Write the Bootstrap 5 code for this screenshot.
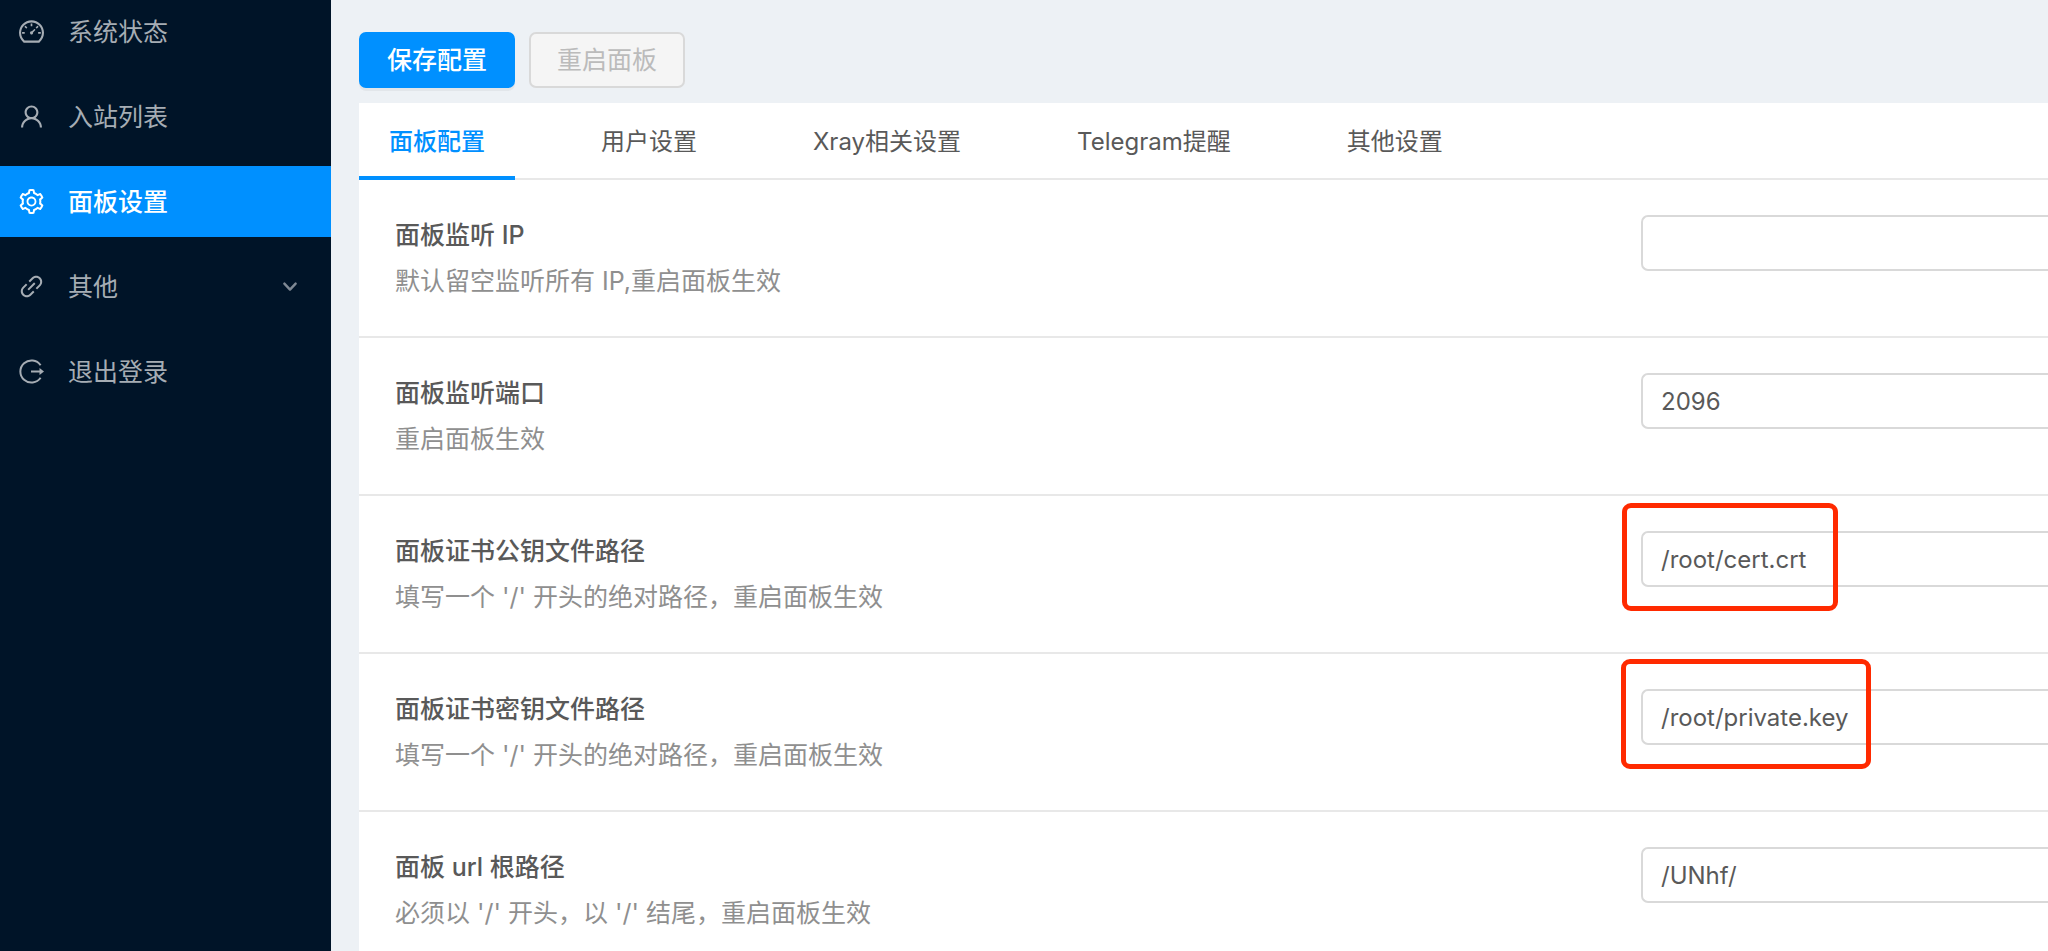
<!DOCTYPE html>
<html lang="zh-CN" data-bs-theme="light">
<head>
<meta charset="utf-8">
<meta name="viewport" content="width=device-width, initial-scale=1">
<title>面板设置</title>
<link href="https://cdn.jsdelivr.net/npm/bootstrap@5.3.0/dist/css/bootstrap.min.css" rel="stylesheet">
<style>
  :root {
    --accent: #0090ff;
    --line: #e8e8e8;
    --field-line: #d9d9d9;
    --ink: #595959;
    --ink-soft: #8f8f8f;
  }
  body {
    font-family: Inter, "Noto Sans CJK SC", sans-serif;
    font-size: 25px;
    line-height: 38px;
    color: var(--ink);
    background: #edf1f5;
  }
  .side { width: 331px; background: #001428; }
  .side-menu { gap: 14px; margin-top: -4px; }
  .side-menu .nav-link {
    gap: 24px;
    height: 71px;
    padding: 0 34px 0 19px;
    border-radius: 0;
    color: #a6adb4;
  }
  .side-menu .nav-link.active { background: var(--accent); color: #fff; font-weight: 500; }
  .side-menu svg { width: 25px; height: 25px; flex: none; }
  .side-menu svg.chevron { width: 14px; height: 14px; }
  .content-area { padding: 32px 0 0 28px; }
  .toolbar { gap: 14px; margin-bottom: 15px; }
  .toolbar .btn {
    height: 56px;
    padding: 0 26px;
    font-size: inherit;
    line-height: 38px;
    border-width: 2px;
    border-radius: 7px;
  }
  .toolbar .btn-save { background: var(--accent); border-color: var(--accent); color: #fff; font-weight: 500; box-shadow: 0 3px 0 rgba(0, 0, 0, .045); }
  .toolbar .btn-restart:disabled { background: #f5f5f5; border-color: var(--field-line); color: #bbb; opacity: 1; }
  .panel-tabs { gap: 56px; border-bottom: 2px solid var(--line); }
  .panel-tabs .nav-link {
    height: 77px;
    padding: 4px 30px 0;
    margin-bottom: -2px;
    font-size: 24px;
    border: 0;
    border-bottom: 4px solid transparent;
    border-radius: 0;
    color: var(--ink);
  }
  .panel-tabs .nav-link.active { background: none; color: var(--accent); border-color: var(--accent); font-weight: 500; }
  .setting {
    display: grid;
    grid-template-columns: 1246fr 407fr;
    height: 158px;
    padding: 35px 0 0 36px;
    border-bottom: 2px solid var(--line);
  }
  .setting-title { font-weight: 500; line-height: 40px; margin-bottom: 7px; }
  .setting-note { color: var(--ink-soft); }
  .setting .form-control {
    height: 56px;
    padding: 0 18px;
    font-size: 24px;
    color: var(--ink);
    border: 2px solid var(--field-line);
    border-radius: 7px;
  }
  .marker { border: 5px solid #ff2a00; border-radius: 9px; pointer-events: none; }
  .marker-cert { left: -19px; top: -28px; width: 216px; height: 108px; }
  .marker-key { left: -20px; top: -30px; width: 250px; height: 110px; }
</style>
</head>
<body>
<div class="d-flex vh-100 overflow-hidden">
  <aside class="side flex-shrink-0">
    <nav class="side-menu nav flex-column flex-nowrap">
      <a class="nav-link d-flex align-items-center" href="#">
        <svg viewBox="64 64 896 896" fill="currentColor" aria-hidden="true"><path d="M924.8 385.6a446.7 446.7 0 0 0-96-142.4 446.7 446.7 0 0 0-142.4-96C631.1 123.8 572.5 112 512 112s-119.1 11.8-174.4 35.2a446.7 446.7 0 0 0-142.4 96 446.7 446.7 0 0 0-96 142.4C75.8 440.9 64 499.5 64 560c0 132.7 58.3 257.7 159.9 343.1l1.7 1.4c5.8 4.8 13.1 7.5 20.6 7.5h531.7c7.5 0 14.8-2.7 20.6-7.5l1.7-1.4C901.7 817.7 960 692.7 960 560c0-60.5-11.9-119.1-35.2-174.4zM761.4 836H262.6A371.12 371.12 0 0 1 140 560c0-99.4 38.7-192.8 109-263 70.3-70.3 163.7-109 263-109 99.4 0 192.8 38.7 263 109 70.3 70.3 109 163.7 109 263 0 105.6-44.5 205.5-122.6 276zM623.5 421.5a8.03 8.03 0 0 0-11.3 0L527.7 506c-18.7-5-39.4-.2-54.1 14.5a55.95 55.95 0 0 0 0 79.2 55.95 55.95 0 0 0 79.2 0 55.87 55.87 0 0 0 14.5-54.1l84.5-84.5c3.1-3.1 3.1-8.2 0-11.3l-28.3-28.3zM490 320h44c4.4 0 8-3.6 8-8v-80c0-4.4-3.6-8-8-8h-44c-4.4 0-8 3.6-8 8v80c0 4.4 3.6 8 8 8zm260 218v44c0 4.4 3.6 8 8 8h80c4.4 0 8-3.6 8-8v-44c0-4.4-3.6-8-8-8h-80c-4.4 0-8 3.6-8 8zm12.7-197.2l-31.1-31.1a8.03 8.03 0 0 0-11.3 0l-56.6 56.6a8.03 8.03 0 0 0 0 11.3l31.1 31.1c3.1 3.1 8.2 3.1 11.3 0l56.6-56.6c3.1-3.1 3.1-8.2 0-11.3zm-458.6-31.1a8.03 8.03 0 0 0-11.3 0l-31.1 31.1a8.03 8.03 0 0 0 0 11.3l56.6 56.6c3.1 3.1 8.2 3.1 11.3 0l31.1-31.1c3.1-3.1 3.1-8.2 0-11.3l-56.6-56.6zM262 530h-80c-4.4 0-8 3.6-8 8v44c0 4.4 3.6 8 8 8h80c4.4 0 8-3.6 8-8v-44c0-4.4-3.6-8-8-8z"/></svg>
        <span>系统状态</span>
      </a>
      <a class="nav-link d-flex align-items-center" href="#">
        <svg viewBox="64 64 896 896" fill="currentColor" aria-hidden="true"><path d="M858.5 763.6a374 374 0 0 0-80.6-119.5 375.63 375.63 0 0 0-119.5-80.6c-.4-.2-.8-.3-1.2-.5C719.5 518 760 444.7 760 362c0-137-111-248-248-248S264 225 264 362c0 82.7 40.5 156 102.8 201.1-.4.2-.8.3-1.2.5-44.8 18.9-85 46-119.5 80.6a375.63 375.63 0 0 0-80.6 119.5A371.7 371.7 0 0 0 136 901.8a8 8 0 0 0 8 8.2h60c4.4 0 7.9-3.5 8-7.8 2-77.2 33-149.5 87.8-204.3 56.7-56.7 132-87.9 212.2-87.9s155.5 31.2 212.2 87.9C779 752.7 810 825 812 902.2c.1 4.4 3.6 7.8 8 7.8h60a8 8 0 0 0 8-8.2c-1-47.8-10.9-94.3-29.5-138.2zM512 534c-45.9 0-89.1-17.9-121.6-50.4S340 407.9 340 362c0-45.9 17.9-89.1 50.4-121.6S466.1 190 512 190s89.1 17.9 121.6 50.4S684 316.1 684 362c0 45.9-17.9 89.1-50.4 121.6S557.9 534 512 534z"/></svg>
        <span>入站列表</span>
      </a>
      <a class="nav-link active d-flex align-items-center" href="#" aria-current="page">
        <svg viewBox="64 64 896 896" fill="currentColor" aria-hidden="true"><path d="M924.8 625.7l-65.5-56c3.1-19 4.7-38.4 4.7-57.8s-1.6-38.8-4.7-57.8l65.5-56a32.03 32.03 0 0 0 9.3-35.2l-.9-2.6a443.74 443.74 0 0 0-79.7-137.9l-1.8-2.1a32.12 32.12 0 0 0-35.1-9.5l-81.3 28.9c-30-24.6-63.5-44-99.7-57.6l-15.7-85a32.05 32.05 0 0 0-25.8-25.7l-2.7-.5c-52.1-9.4-106.9-9.4-159 0l-2.7.5a32.05 32.05 0 0 0-25.8 25.7l-15.8 85.4a351.86 351.86 0 0 0-99 57.4l-81.9-29.1a32 32 0 0 0-35.1 9.5l-1.8 2.1a446.02 446.02 0 0 0-79.7 137.9l-.9 2.6c-4.5 12.5-.8 26.5 9.3 35.2l66.3 56.6c-3.1 18.8-4.6 38-4.6 57.1 0 19.2 1.5 38.4 4.6 57.1L99 625.5a32.03 32.03 0 0 0-9.3 35.2l.9 2.6c18.1 50.4 44.9 96.9 79.7 137.9l1.8 2.1a32.12 32.12 0 0 0 35.1 9.5l81.9-29.1c29.8 24.5 63.1 43.9 99 57.4l15.8 85.4a32.05 32.05 0 0 0 25.8 25.7l2.7.5a449.4 449.4 0 0 0 159 0l2.7-.5a32.05 32.05 0 0 0 25.8-25.7l15.7-85a350 350 0 0 0 99.7-57.6l81.3 28.9a32 32 0 0 0 35.1-9.5l1.8-2.1c34.8-41.1 61.6-87.5 79.7-137.9l.9-2.6c4.5-12.3.8-26.3-9.3-35zM788.3 465.9c2.5 15.1 3.8 30.6 3.8 46.1s-1.3 31-3.8 46.1l-6.6 40.1 74.7 63.9a370.03 370.03 0 0 1-42.6 73.6L721 702.8l-31.4 25.8c-23.9 19.6-50.5 35-79.3 45.8l-38.1 14.3-17.9 97a377.5 377.5 0 0 1-85 0l-17.9-97.2-37.8-14.5c-28.5-10.8-55-26.2-78.7-45.7l-31.4-25.9-93.4 33.2c-17-22.9-31.2-47.6-42.6-73.6l75.5-64.5-6.5-40c-2.4-14.9-3.7-30.3-3.7-45.5 0-15.3 1.2-30.6 3.7-45.5l6.5-40-75.5-64.5c11.3-26.1 25.6-50.7 42.6-73.6l93.4 33.2 31.4-25.9c23.7-19.5 50.2-34.9 78.7-45.7l37.9-14.3 17.9-97.2c28.1-3.2 56.8-3.2 85 0l17.9 97 38.1 14.3c28.7 10.8 55.4 26.2 79.3 45.8l31.4 25.8 92.8-32.9c17 22.9 31.2 47.6 42.6 73.6L781.8 426l6.5 39.9zM512 336c-97.2 0-176 78.8-176 176s78.8 176 176 176 176-78.8 176-176-78.8-176-176-176zm79.2 255.2A111.6 111.6 0 0 1 512 624c-29.9 0-58-11.7-79.2-32.8A111.6 111.6 0 0 1 400 512c0-29.9 11.7-58 32.8-79.2C454 411.6 482.1 400 512 400c29.9 0 58 11.6 79.2 32.8A111.6 111.6 0 0 1 624 512c0 29.9-11.7 58-32.8 79.2z"/></svg>
        <span>面板设置</span>
      </a>
      <a class="nav-link d-flex align-items-center" href="#" aria-expanded="false">
        <svg viewBox="64 64 896 896" fill="currentColor" aria-hidden="true"><path d="M574 665.4a8.03 8.03 0 0 0-11.3 0L446.5 781.6c-53.8 53.8-144.6 59.5-204 0-59.5-59.5-53.8-150.2 0-204l116.2-116.2c3.1-3.1 3.1-8.2 0-11.3l-39.8-39.8a8.03 8.03 0 0 0-11.3 0L191.4 526.5c-84.6 84.6-84.6 221.5 0 306s221.5 84.6 306 0l116.2-116.2c3.1-3.1 3.1-8.2 0-11.3L574 665.4zm258.6-474c-84.6-84.6-221.5-84.6-306 0L410.3 307.6a8.03 8.03 0 0 0 0 11.3l39.7 39.7c3.1 3.1 8.2 3.1 11.3 0l116.2-116.2c53.8-53.8 144.6-59.5 204 0 59.5 59.5 53.8 150.2 0 204L665.3 562.6a8.03 8.03 0 0 0 0 11.3l39.8 39.8c3.1 3.1 8.2 3.1 11.3 0l116.2-116.2c84.5-84.6 84.5-221.5 0-306.1zM610.1 372.3a8.03 8.03 0 0 0-11.3 0L372.3 598.7a8.03 8.03 0 0 0 0 11.3l39.6 39.6c3.1 3.1 8.2 3.1 11.3 0l226.4-226.4c3.1-3.1 3.1-8.2 0-11.3l-39.5-39.6z"/></svg>
        <span>其他</span>
        <svg class="chevron ms-auto" viewBox="0 0 14 14" fill="none" stroke="#7f8994" stroke-width="2.4" stroke-linecap="round" stroke-linejoin="round" aria-hidden="true"><path d="M1.4 3.6 7 9.6l5.6-6"/></svg>
      </a>
      <a class="nav-link d-flex align-items-center" href="#">
        <svg viewBox="0 0 25 25" fill="none" stroke="currentColor" stroke-width="2" aria-hidden="true"><path d="M21.6 6.2A11.1 11.1 0 1 0 21.6 18.8M12 12.5h9"/><path d="M20.5 9 25 12.5 20.5 16z" fill="currentColor" stroke="none"/></svg>
        <span>退出登录</span>
      </a>
    </nav>
  </aside>

  <main class="content-area flex-grow-1">
    <div class="toolbar d-flex">
      <button type="button" class="btn btn-save">保存配置</button>
      <button type="button" class="btn btn-restart" disabled>重启面板</button>
    </div>

    <section class="bg-white">
      <ul class="panel-tabs nav flex-nowrap text-nowrap" role="tablist">
        <li class="nav-item"><a class="nav-link d-flex align-items-center active" href="#" role="tab" aria-selected="true">面板配置</a></li>
        <li class="nav-item"><a class="nav-link d-flex align-items-center" href="#" role="tab">用户设置</a></li>
        <li class="nav-item"><a class="nav-link d-flex align-items-center" href="#" role="tab">Xray相关设置</a></li>
        <li class="nav-item"><a class="nav-link d-flex align-items-center" href="#" role="tab">Telegram提醒</a></li>
        <li class="nav-item"><a class="nav-link d-flex align-items-center" href="#" role="tab">其他设置</a></li>
      </ul>

      <form>
        <div class="setting">
          <div>
            <label class="setting-title d-block" for="listen-ip">面板监听 IP</label>
            <div class="setting-note">默认留空监听所有 IP,重启面板生效</div>
          </div>
          <div><input class="form-control border-end-0 rounded-end-0" type="text" id="listen-ip"></div>
        </div>
        <div class="setting">
          <div>
            <label class="setting-title d-block" for="listen-port">面板监听端口</label>
            <div class="setting-note">重启面板生效</div>
          </div>
          <div><input class="form-control border-end-0 rounded-end-0" type="text" id="listen-port" value="2096"></div>
        </div>
        <div class="setting">
          <div>
            <label class="setting-title d-block" for="cert-file">面板证书公钥文件路径</label>
            <div class="setting-note">填写一个 '/' 开头的绝对路径，重启面板生效</div>
          </div>
          <div class="position-relative">
            <input class="form-control border-end-0 rounded-end-0" type="text" id="cert-file" value="/root/cert.crt">
            <div class="marker marker-cert position-absolute"></div>
          </div>
        </div>
        <div class="setting">
          <div>
            <label class="setting-title d-block" for="key-file">面板证书密钥文件路径</label>
            <div class="setting-note">填写一个 '/' 开头的绝对路径，重启面板生效</div>
          </div>
          <div class="position-relative">
            <input class="form-control border-end-0 rounded-end-0" type="text" id="key-file" value="/root/private.key">
            <div class="marker marker-key position-absolute"></div>
          </div>
        </div>
        <div class="setting">
          <div>
            <label class="setting-title d-block" for="base-path">面板 url 根路径</label>
            <div class="setting-note">必须以 '/' 开头，以 '/' 结尾，重启面板生效</div>
          </div>
          <div><input class="form-control border-end-0 rounded-end-0" type="text" id="base-path" value="/UNhf/"></div>
        </div>
      </form>
    </section>
  </main>
</div>
<script src="https://cdn.jsdelivr.net/npm/bootstrap@5.3.0/dist/js/bootstrap.bundle.min.js"></script>
</body>
</html>
